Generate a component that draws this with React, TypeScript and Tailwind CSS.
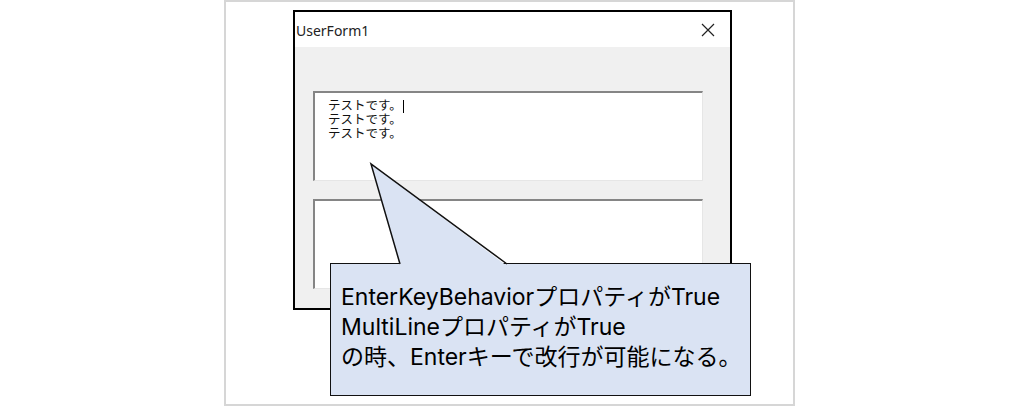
import React from "react";

function TextBox({ lines }: { lines?: React.ReactNode[] }) {
  return (
    <div className="h-[90px] w-[390px] border-t-2 border-l-2 border-r border-b border-t-[#858585] border-l-[#858585] border-r-[#e6e6e6] border-b-[#e6e6e6] bg-white pl-[13px] pt-[6px]">
      {lines?.map((line, i) => (
        <div
          key={i}
          className="font-['Liberation_Sans','Noto_Sans_CJK_JP',sans-serif] text-[12.5px] leading-[14px] text-[#111]"
        >
          {line}
        </div>
      ))}
    </div>
  );
}

export default function App() {
  return (
    <div className="w-[1024px] h-[408px] bg-white flex">
      <div className="relative ml-[224px] w-[571px] h-[406px] border-2 border-[#d6d6d6]">
        {/* UserForm window */}
        <div className="ml-[67px] mt-[8px] w-[439px] h-[300px] border-2 border-black flex flex-col">
          <div className="h-[35px] bg-white flex items-center justify-between pl-[1px] pr-[15px] pt-[2px]">
            <span className="font-['Noto_Sans',sans-serif] text-[14px] text-[#222]">UserForm1</span>
            <svg width="14" height="14" viewBox="0 0 14 14" className="-mt-[2px]">
              <path d="M1 1 L13 13 M13 1 L1 13" stroke="#222" strokeWidth="1.2" />
            </svg>
          </div>
          <div className="flex-1 bg-[#f0f0f0] pl-[18px] pt-[44px] flex flex-col gap-[18px]">
            <TextBox
              lines={[
                <>
                  テストです。
                  <span className="inline-block w-px h-[13px] bg-black align-middle ml-[1px]" />
                </>,
                "テストです。",
                "テストです。",
              ]}
            />
            <TextBox />
          </div>
        </div>

        {/* callout */}
        <div className="absolute left-[104px] top-[261px] w-[421px] h-[133px] border-[1.5px] border-[#111] bg-[#dae3f3] pl-[10px] pt-[18px]">
          <div className="font-['Inter','Noto_Sans_CJK_JP',sans-serif] text-[23px] leading-[30px] text-black whitespace-nowrap">
            <div>EnterKeyBehaviorプロパティがTrue</div>
            <div>MultiLineプロパティがTrue</div>
            <div>の時、Enterキーで改行が可能になる。</div>
          </div>
        </div>
        <svg className="absolute left-[134px] top-[158px]" width="160" height="110" viewBox="0 0 160 110">
          <polygon points="11,4 40,106 147,106" fill="#dae3f3" />
          <path d="M40,104 L11,4 L147,104" fill="none" stroke="#111" strokeWidth="1.5" />
        </svg>
      </div>
    </div>
  );
}
